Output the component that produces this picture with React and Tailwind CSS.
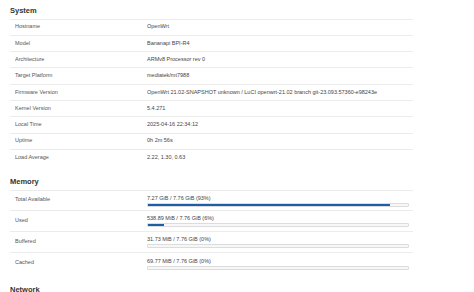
import React from 'react'

const system = [
  ['Hostname', 'OpenWrt'],
  ['Model', 'Bananapi BPI-R4'],
  ['Architecture', 'ARMv8 Processor rev 0'],
  ['Target Platform', 'mediatek/mt7988'],
  ['Firmware Version', 'OpenWrt 21.02-SNAPSHOT unknown / LuCI openwrt-21.02 branch git-23.093.57360-e98243e'],
  ['Kernel Version', '5.4.271'],
  ['Local Time', '2025-04-16 22:34:12'],
  ['Uptime', '0h 2m 56s'],
  ['Load Average', '2.22, 1.30, 0.63'],
]

const memory = [
  { name: 'Total Available', text: '7.27 GiB / 7.76 GiB (93%)', pct: 93 },
  { name: 'Used', text: '538.89 MiB / 7.76 GiB (6%)', pct: 6 },
  { name: 'Buffered', text: '31.73 MiB / 7.76 GiB (0%)', pct: 0 },
  { name: 'Cached', text: '69.77 MiB / 7.76 GiB (0%)', pct: 0 },
]

const Heading = ({ children, className = '' }) => (
  <h2 className={`text-[7.5px] leading-[10px] font-bold text-[#333] mb-[2.5px] ${className}`}>
    {children}
  </h2>
)

const App = () => {
  return (
    <div
      className="w-[474px] h-[292px] overflow-hidden bg-white px-[10px] pt-[6px]"
      style={{ fontFamily: '"Liberation Sans", Arial, sans-serif' }}
    >
      {/* System */}
      <Heading>System</Heading>
      <div className="w-[403px]">
        {system.map(([label, value]) => (
          <div
            key={label}
            className="h-[16.3px] box-border border-t border-[#ececec] flex items-center text-[5.5px] leading-none"
          >
            <div className="w-[137px] pl-[5px] text-[#555]">{label}</div>
            <div className="text-[#444] whitespace-nowrap">{value}</div>
          </div>
        ))}
      </div>

      {/* Memory */}
      <Heading className="mt-[12px]">Memory</Heading>
      <div className="w-[403px]">
        {memory.map((m, i) => (
          <div
            key={m.name}
            className={`h-[21px] box-border flex items-center text-[5.5px] leading-none ${i < memory.length - 1 ? 'border-b' : ''} ${i === 0 ? 'border-t' : ''} border-[#ececec]`}
          >
            <div className="w-[137px] pl-[5px] text-[#555]">{m.name}</div>
            <div className="flex flex-col pt-[1px]">
              <div className="text-[#444] leading-[7px] whitespace-nowrap">{m.text}</div>
              <div className="w-[262px] h-[4px] mt-[1px] box-border border border-[#dcdcdc] rounded-[1px] bg-[#f7f7f7] overflow-hidden">
                <div className="h-full bg-[#1d5ea8]" style={{ width: `${m.pct}%` }} />
              </div>
            </div>
          </div>
        ))}
      </div>

      {/* Network */}
      <Heading className="mt-[11px]">Network</Heading>
    </div>
  )
}

export default App
